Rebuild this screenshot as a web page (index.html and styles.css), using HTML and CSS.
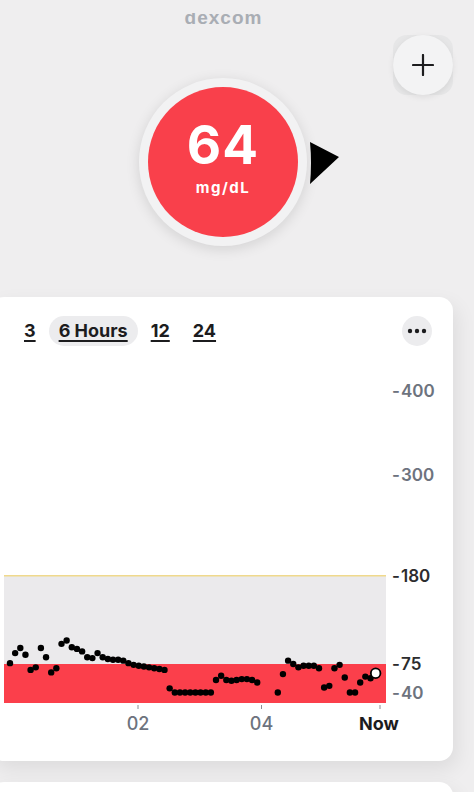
FILE: index.html
```html
<!DOCTYPE html>
<html lang="en">
<head>
  <meta charset="UTF-8">
  <meta name="viewport" content="width=device-width, initial-scale=1.0">
  <title>Glucose</title>
  <link rel="stylesheet" href="styles.css">
</head>
<body>
  <header class="top">
    <div class="brand"><span>dexcom</span></div>
    <button class="add" aria-label="Add event">
      <span class="add-circle">
        <svg width="22" height="22" viewBox="0 0 22 22"><path d="M11 1v20M1 11h20" stroke="#1c1c1e" stroke-width="2.2" stroke-linecap="round"/></svg>
      </span>
    </button>
    <div class="reading">
      <div class="ring">
        <div class="value">
          <span class="num">64</span>
          <span class="unit">mg/dL</span>
        </div>
      </div>
      <svg class="trend" width="32" height="46" viewBox="0 0 32 46"><path d="M1 3 L30 18 L1 45 Q3 24 1 3 Z" fill="#000"/></svg>
    </div>
  </header>

  <section class="card chart-card">
    <div class="range-bar">
      <div class="ranges">
        <a class="range">3</a>
        <a class="range active">6 Hours</a>
        <a class="range">12</a>
        <a class="range">24</a>
      </div>
      <button class="more" aria-label="More">
        <svg width="30" height="30" viewBox="0 0 30 30"><circle cx="8" cy="15" r="2.2"/><circle cx="15" cy="15" r="2.2"/><circle cx="22" cy="15" r="2.2"/></svg>
      </button>
    </div>
    <svg id="chart" class="chart" width="463" height="415" viewBox="0 0 463 415"></svg>
  </section>

  <section class="card next-card"></section>

  <script>
    // glucose readings, one every 5 minutes, oldest first (null = no reading)
    const readings = [
      76, 88, 94, 86, 68, 71, 94, 83, 65, 70,
      99, 103, 95, 93, 90, 83, 82, 88, 83, 81,
      80, 80, 79, 76, 74, 73, 72, 71, 70, 69,
      68, 46, 41, 41, 41, 41, 41, 41, 41, 41,
      56, 61, 56, 55, 56, 57, 57, 56, 53, null,
      null, null, 41, 63, 79, 75, 71, 73, 73, 73,
      70, 47, 49, 70, 74, 59, 41, 41, 53, 60,
      58, 64
    ];

    const svg = document.getElementById('chart');
    const NS = 'http://www.w3.org/2000/svg';
    const plotLeft = 14, plotRight = 396, plotBottom = 357;

    function y(g) { return 347.4 - (g - 40) * 0.84; }
    function x(i) { return 20 + i * 5.15; }

    function add(tag, attrs, text) {
      const el = document.createElementNS(NS, tag);
      for (const k in attrs) el.setAttribute(k, attrs[k]);
      if (text) el.textContent = text;
      svg.appendChild(el);
      return el;
    }

    // target range and low band
    add('rect', { x: plotLeft, y: y(180), width: plotRight - plotLeft, height: y(75) - y(180), fill: '#ebeaec' });
    add('rect', { x: plotLeft, y: y(75), width: plotRight - plotLeft, height: plotBottom - y(75), fill: '#fb3f4b' });
    add('line', { x1: plotLeft, x2: plotRight, y1: y(180), y2: y(180), stroke: '#f0d98c', 'stroke-width': 1.5 });

    // y axis
    [[400, false], [300, false], [180, true], [75, true], [40, false]].forEach(function (t) {
      const cls = t[1] ? 'ylabel strong' : 'ylabel';
      add('text', { x: 402, y: y(t[0]) + 6, class: cls }, '-');
      add('text', { x: 411, y: y(t[0]) + 6, class: cls }, String(t[0]));
    });

    // x axis
    [[148, '02', 'xlabel'], [271.5, '04', 'xlabel'], [390, 'Now', 'xlabel now']].forEach(function (t) {
      add('line', { x1: t[0], x2: t[0], y1: 359, y2: 363, stroke: '#8a8d93', 'stroke-width': 1 });
      add('text', { x: t[2] === 'xlabel now' ? t[0] - 1 : t[0], y: 384, class: t[2], 'text-anchor': 'middle' }, t[1]);
    });

    // readings
    readings.forEach(function (g, i) {
      if (g === null) return;
      if (i === readings.length - 1) {
        add('circle', { cx: x(i), cy: y(g), r: 4.8, fill: '#fff', stroke: '#000', 'stroke-width': 1.8 });
      } else {
        add('circle', { cx: x(i), cy: y(g), r: 3.2, fill: '#000' });
      }
    });
  </script>
</body>
</html>
```

FILE: styles.css
```css
body { margin: 0; background: #efeeef; font-family: Inter, "Liberation Sans", sans-serif; color: #1c1c1e; overflow: hidden; }

.top { position: relative; height: 297px; box-sizing: border-box; padding-top: 13px; }
.brand { height: 12px; margin-right: 27px; overflow: hidden; text-align: center; }
.brand span { display: block; margin-top: -5px; font: 700 19px/19px "Liberation Sans", Arial, sans-serif; letter-spacing: 1px; color: #a9adb4; }

.add { position: absolute; top: 35px; right: 21px; width: 60px; height: 60px; padding: 0; border: none; border-radius: 14px; background: #e6e6e7; cursor: pointer; }
.add-circle { display: flex; width: 60px; height: 60px; align-items: center; justify-content: center; border-radius: 50%; background: #f3f3f4; box-shadow: 0 2px 6px rgba(0,0,0,0.08); }

.reading { display: flex; align-items: center; margin: 53px 0 0 139px; }
.ring { width: 168px; height: 168px; border-radius: 50%; background: #f2f2f3; box-shadow: 0 3px 14px rgba(0,0,0,0.12); display: flex; align-items: center; justify-content: center; }
.value { width: 150px; height: 150px; box-sizing: border-box; padding-bottom: 10px; border-radius: 50%; background: #f9404b; color: #fff; display: flex; flex-direction: column; align-items: center; justify-content: center; }
.num { font-size: 53px; line-height: 53px; font-weight: 700; letter-spacing: 1px; }
.unit { margin-top: 8px; font-size: 15px; line-height: 15px; font-weight: 700; letter-spacing: 1.5px; }
.trend { margin-left: 2px; }

.card { background: #fff; border-radius: 14px; margin: 0 21px 0 -10px; box-shadow: 4px 8px 20px rgba(0,0,0,0.08); }
.chart-card { height: 464px; }
.range-bar { display: flex; justify-content: space-between; align-items: center; padding: 19px 21px 0 24px; }
.ranges { display: flex; gap: 3px; }
.range { height: 30px; line-height: 30px; padding: 0 10px; border-radius: 15px; font-size: 18px; font-weight: 700; color: #1c1c1e; text-decoration: underline; text-decoration-thickness: 2px; text-underline-offset: 3px; cursor: pointer; }
.range.active { background: #ececee; }
.more { width: 30px; height: 30px; padding: 0; border: none; border-radius: 50%; background: #ececee; fill: #1c1c1e; cursor: pointer; }
.more svg { display: block; }
.chart { display: block; }

.ylabel { font-size: 17px; font-weight: 600; fill: #6d737e; }
.ylabel.strong { fill: #2c2c2e; }
.xlabel { font-size: 18px; font-weight: 500; fill: #6d737e; }
.xlabel.now { font-weight: 700; fill: #1c1c1e; }

.next-card { height: 60px; margin-top: 21px; border-radius: 14px 14px 0 0; }
```
